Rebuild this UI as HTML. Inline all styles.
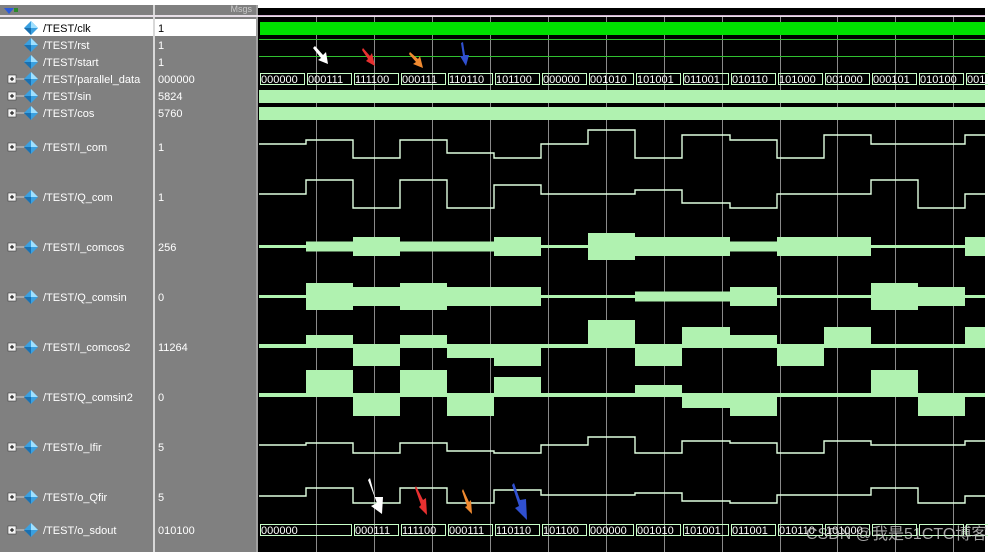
<!DOCTYPE html>
<html><head><meta charset="utf-8"><style>
html,body{margin:0;padding:0;background:#fff;}
svg{display:block;}
text{font-family:"Liberation Sans","Noto Sans CJK SC",sans-serif;font-size:11px;}
</style></head><body>
<svg width="988" height="552" viewBox="0 0 988 552" xmlns="http://www.w3.org/2000/svg" xmlns:xlink="http://www.w3.org/1999/xlink">
<rect x="0" y="0" width="988" height="552" fill="#fff"/>
<rect x="0" y="5" width="153" height="547" fill="#808080"/>
<rect x="155" y="5" width="101" height="547" fill="#808080"/>
<rect x="153" y="5" width="2" height="547" fill="#d8d8d8"/>
<rect x="256" y="5" width="2" height="547" fill="#a0a0a0"/>
<rect x="258" y="8" width="727" height="544" fill="#000"/>
<rect x="0" y="15" width="985" height="2" fill="#e8e0e8"/>
<rect x="258" y="15" width="727" height="1" fill="#d0b0d0"/>
<path d="M4 8 L14 8 L9 14Z" fill="#2a5adc"/><rect x="14" y="8" width="4" height="4" fill="#2a8a2a"/>
<text x="252" y="12" fill="#c8c8c8" text-anchor="end" style="font-size:9px">Msgs</text>
<rect x="0" y="19" width="153" height="17" fill="#fff"/>
<rect x="155" y="19" width="101" height="17" fill="#fff"/>

<g stroke="#8a8a8a" stroke-width="1">
<line x1="316.5" y1="17" x2="316.5" y2="552"/><line x1="374.5" y1="17" x2="374.5" y2="552"/>
<line x1="432.5" y1="17" x2="432.5" y2="552"/><line x1="490.5" y1="17" x2="490.5" y2="552"/>
<line x1="548.5" y1="17" x2="548.5" y2="552"/><line x1="606.5" y1="17" x2="606.5" y2="552"/>
<line x1="664.5" y1="17" x2="664.5" y2="552"/><line x1="722.5" y1="17" x2="722.5" y2="552"/>
<line x1="780.5" y1="17" x2="780.5" y2="552"/><line x1="837.5" y1="17" x2="837.5" y2="552"/>
<line x1="895.5" y1="17" x2="895.5" y2="552"/><line x1="953.5" y1="17" x2="953.5" y2="552"/>
</g>

<rect x="260" y="22" width="725" height="13" fill="#00e000"/>
<line x1="259" y1="39.5" x2="985" y2="39.5" stroke="#30c030"/>
<line x1="259" y1="56.5" x2="985" y2="56.5" stroke="#30c030"/>
<rect x="259" y="90" width="726" height="13" fill="#b0f2b0"/>
<rect x="259" y="107" width="726" height="13" fill="#b0f2b0"/>

<g fill="none" stroke="#c8ffc8" stroke-width="1">
<rect x="260.5" y="73.5" width="44" height="11"/><rect x="307.5" y="73.5" width="44" height="11"/>
<rect x="354.5" y="73.5" width="44" height="11"/><rect x="401.5" y="73.5" width="44" height="11"/>
<rect x="448.5" y="73.5" width="44" height="11"/><rect x="495.5" y="73.5" width="44" height="11"/>
<rect x="542.5" y="73.5" width="44" height="11"/><rect x="589.5" y="73.5" width="44" height="11"/>
<rect x="636.5" y="73.5" width="44" height="11"/><rect x="683.5" y="73.5" width="45" height="11"/>
<rect x="731.5" y="73.5" width="44" height="11"/><rect x="778.5" y="73.5" width="44" height="11"/>
<rect x="825.5" y="73.5" width="44" height="11"/><rect x="872.5" y="73.5" width="44" height="11"/>
<rect x="919.5" y="73.5" width="44" height="11"/><rect x="966.5" y="73.5" width="24" height="11"/>
</g>
<g fill="#fff">
<text x="261" y="83">000000</text><text x="308" y="83">000111</text><text x="355" y="83">111100</text>
<text x="402" y="83">000111</text><text x="449" y="83">110110</text><text x="496" y="83">101100</text>
<text x="543" y="83">000000</text><text x="590" y="83">001010</text><text x="637" y="83">101001</text>
<text x="684" y="83">011001</text><text x="732" y="83">010110</text><text x="779" y="83">101000</text>
<text x="826" y="83">001000</text><text x="873" y="83">000101</text><text x="920" y="83">010100</text>
<text x="967" y="83">001</text>
</g>

<g fill="none" stroke="#e0ffe0" stroke-width="1.4">
<path d="M259 144 H306 V140 H353 V158 H400 V140 H447 V153 H494 V158 H541 V144 H588 V130 H635 V158 H682 V135 H730 V140 H777 V158 H824 V135 H871 V144 H965 V135 H985"/>
<path d="M259 194 H306 V180 H353 V208 H400 V180 H447 V208 H494 V185 H541 V194 H635 V190 H682 V203 H730 V208 H777 V194 H871 V180 H918 V208 H965 V194 H985"/>
<path d="M259 445 H306 V443 H353 V453 H400 V443 H447 V451 H494 V453 H541 V445 H588 V437 H635 V453 H682 V441 H730 V443 H777 V453 H824 V441 H871 V445 H965 V441 H985"/>
<path d="M259 496 H306 V488 H353 V503 H400 V488 H447 V503 H494 V490 H541 V495 H635 V493 H682 V501 H730 V503 H777 V495 H871 V488 H918 V503 H965 V496 H985"/>
</g>

<g fill="#b0f2b0">
<rect x="259" y="245" width="726" height="3"/>
<rect x="306" y="241.5" width="47" height="10"/><rect x="353" y="237" width="47" height="19"/>
<rect x="400" y="241.5" width="94" height="10"/><rect x="494" y="237" width="47" height="19"/>
<rect x="588" y="233" width="47" height="27"/><rect x="635" y="237" width="95" height="19"/>
<rect x="730" y="241.5" width="47" height="10"/><rect x="777" y="237" width="94" height="19"/>
<rect x="965" y="237" width="20" height="19"/>
<rect x="259" y="295" width="726" height="3"/>
<rect x="306" y="283" width="47" height="27"/><rect x="353" y="287" width="47" height="19"/>
<rect x="400" y="283" width="47" height="27"/><rect x="447" y="287" width="94" height="19"/>
<rect x="635" y="291.5" width="95" height="10"/><rect x="730" y="287" width="47" height="19"/>
<rect x="871" y="283" width="47" height="27"/><rect x="918" y="287" width="47" height="19"/>
<rect x="259" y="344" width="726" height="4"/>
<rect x="306" y="335" width="47" height="13"/><rect x="353" y="344" width="47" height="22"/>
<rect x="400" y="335" width="47" height="13"/><rect x="447" y="344" width="47" height="14"/>
<rect x="494" y="344" width="47" height="22"/><rect x="588" y="320" width="47" height="28"/>
<rect x="635" y="344" width="47" height="22"/><rect x="682" y="327" width="48" height="21"/>
<rect x="730" y="335" width="47" height="13"/><rect x="777" y="344" width="47" height="22"/>
<rect x="824" y="327" width="47" height="21"/><rect x="965" y="327" width="20" height="21"/>
<rect x="259" y="393" width="726" height="4"/>
<rect x="306" y="370" width="47" height="27"/><rect x="353" y="393" width="47" height="23"/>
<rect x="400" y="370" width="47" height="27"/><rect x="447" y="393" width="47" height="23"/>
<rect x="494" y="377" width="47" height="20"/><rect x="635" y="385" width="47" height="12"/>
<rect x="682" y="393" width="48" height="15"/><rect x="730" y="393" width="47" height="23"/>
<rect x="871" y="370" width="47" height="27"/><rect x="918" y="393" width="47" height="23"/>
</g>

<g fill="none" stroke="#c8ffc8" stroke-width="1">
<rect x="260.5" y="524.5" width="91" height="11"/><rect x="354.5" y="524.5" width="44" height="11"/>
<rect x="401.5" y="524.5" width="44" height="11"/><rect x="448.5" y="524.5" width="44" height="11"/>
<rect x="495.5" y="524.5" width="44" height="11"/><rect x="542.5" y="524.5" width="44" height="11"/>
<rect x="589.5" y="524.5" width="44" height="11"/><rect x="636.5" y="524.5" width="44" height="11"/>
<rect x="683.5" y="524.5" width="45" height="11"/><rect x="731.5" y="524.5" width="44" height="11"/>
<rect x="778.5" y="524.5" width="44" height="11"/><rect x="825.5" y="524.5" width="44" height="11"/>
<rect x="872.5" y="524.5" width="44" height="11"/><rect x="919.5" y="524.5" width="44" height="11"/>
<rect x="966.5" y="524.5" width="24" height="11"/>
</g>
<g fill="#fff">
<text x="261" y="534">000000</text><text x="355" y="534">000111</text><text x="402" y="534">111100</text>
<text x="449" y="534">000111</text><text x="496" y="534">110110</text><text x="543" y="534">101100</text>
<text x="590" y="534">000000</text><text x="637" y="534">001010</text><text x="684" y="534">101001</text>
<text x="732" y="534">011001</text><text x="779" y="534">010110</text><text x="826" y="534">101000</text>
</g>
<text x="806" y="539" fill="#d0d0d0" fill-opacity="0.8" style="font-size:16px">CSDN @我是51CTO博客</text>

<path d="M315 46 L323 55 L326 52 L328 64 L318 60 L321 58 L313 48Z" fill="#fff"/>
<path d="M363 48 L370 56 L372 53 L375 66 L366 61 L368 59 L362 50Z" fill="#e83030"/>
<path d="M410 52 L418 59 L420 56 L423 68 L413 64 L416 62 L409 54Z" fill="#f08a30"/>
<path d="M463 42 L465 55 L469 55 L466 66 L460 56 L463 56 L461 43Z" fill="#3050d0"/>
<path d="M370 478 L375 497 L383 497 L382 514 L371 506 L377 503 L368 480Z" fill="#fff"/>
<path d="M416 486 L423 500 L426 498 L427 515 L419 507 L421 505 L415 488Z" fill="#e83030"/>
<path d="M463 489 L469 502 L471 500 L472 514 L465 507 L467 506 L462 491Z" fill="#f08a30"/>
<path d="M514 483 L520 500 L526 499 L527 520 L515 508 L519 506 L512 485Z" fill="#3050d0"/>

<defs>
<g id="dia"><path d="M0 -7 L7 0 L0 7 L-7 0Z" fill="#3aa0e0"/><path d="M0 -7 L7 0 L0 0Z" fill="#9fe0ff"/><path d="M-7 0 L0 7 L0 0Z" fill="#1a70b0"/></g>
<g id="plus"><rect x="0" y="-4" width="8" height="8" fill="#f4f4f4" stroke="#404040" stroke-width="0.6"/><path d="M2 0 H6 M4 -2 V2" stroke="#000" stroke-width="1"/><line x1="8" y1="0" x2="17" y2="0" stroke="#d0d0d0"/></g>
</defs>
<use href="#dia" xlink:href="#dia" x="31" y="28"/><use href="#dia" xlink:href="#dia" x="31" y="45"/><use href="#dia" xlink:href="#dia" x="31" y="62"/>
<use href="#plus" xlink:href="#plus" x="8" y="79"/><use href="#dia" xlink:href="#dia" x="31" y="79"/>
<use href="#plus" xlink:href="#plus" x="8" y="96"/><use href="#dia" xlink:href="#dia" x="31" y="96"/>
<use href="#plus" xlink:href="#plus" x="8" y="113"/><use href="#dia" xlink:href="#dia" x="31" y="113"/>
<use href="#plus" xlink:href="#plus" x="8" y="147"/><use href="#dia" xlink:href="#dia" x="31" y="147"/>
<use href="#plus" xlink:href="#plus" x="8" y="197"/><use href="#dia" xlink:href="#dia" x="31" y="197"/>
<use href="#plus" xlink:href="#plus" x="8" y="247"/><use href="#dia" xlink:href="#dia" x="31" y="247"/>
<use href="#plus" xlink:href="#plus" x="8" y="297"/><use href="#dia" xlink:href="#dia" x="31" y="297"/>
<use href="#plus" xlink:href="#plus" x="8" y="347"/><use href="#dia" xlink:href="#dia" x="31" y="347"/>
<use href="#plus" xlink:href="#plus" x="8" y="397"/><use href="#dia" xlink:href="#dia" x="31" y="397"/>
<use href="#plus" xlink:href="#plus" x="8" y="447"/><use href="#dia" xlink:href="#dia" x="31" y="447"/>
<use href="#plus" xlink:href="#plus" x="8" y="497"/><use href="#dia" xlink:href="#dia" x="31" y="497"/>
<use href="#plus" xlink:href="#plus" x="8" y="530"/><use href="#dia" xlink:href="#dia" x="31" y="530"/>
<g fill="#fff">
<text x="43" y="32" fill="#000">/TEST/clk</text>
<text x="43" y="49">/TEST/rst</text>
<text x="43" y="66">/TEST/start</text>
<text x="43" y="83">/TEST/parallel_data</text>
<text x="43" y="100">/TEST/sin</text>
<text x="43" y="117">/TEST/cos</text>
<text x="43" y="151">/TEST/I_com</text>
<text x="43" y="201">/TEST/Q_com</text>
<text x="43" y="251">/TEST/I_comcos</text>
<text x="43" y="301">/TEST/Q_comsin</text>
<text x="43" y="351">/TEST/I_comcos2</text>
<text x="43" y="401">/TEST/Q_comsin2</text>
<text x="43" y="451">/TEST/o_Ifir</text>
<text x="43" y="501">/TEST/o_Qfir</text>
<text x="43" y="534">/TEST/o_sdout</text>
<text x="158" y="32" fill="#000">1</text>
<text x="158" y="49">1</text>
<text x="158" y="66">1</text>
<text x="158" y="83">000000</text>
<text x="158" y="100">5824</text>
<text x="158" y="117">5760</text>
<text x="158" y="151">1</text>
<text x="158" y="201">1</text>
<text x="158" y="251">256</text>
<text x="158" y="301">0</text>
<text x="158" y="351">11264</text>
<text x="158" y="401">0</text>
<text x="158" y="451">5</text>
<text x="158" y="501">5</text>
<text x="158" y="534">010100</text>
</g>
</svg>
</body></html>
